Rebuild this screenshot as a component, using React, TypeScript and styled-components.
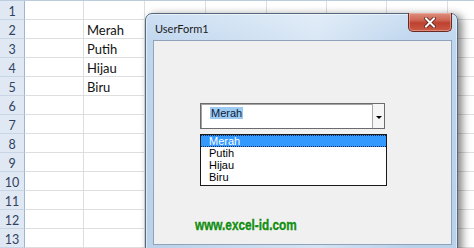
import React from 'react';
import styled, { createGlobalStyle } from 'styled-components';

const COLS = [25, 59, 61, 61, 61, 60, 60, 61, 61];
const GRID = COLS.map(c => `${c}px`).join(' ');

const GlobalStyle = createGlobalStyle`
  html, body {
    margin: 0;
    padding: 0;
    background: #ffffff;
    overflow: hidden;
  }
  body {
    font-family: Lato, 'Liberation Sans', sans-serif;
  }
`;

const Sheet = styled.div`
  position: relative;
  width: 474px;
  height: 248px;
  overflow: hidden;
  background: #ffffff;
`;

const HeaderStrip = styled.div`
  display: grid;
  grid-template-columns: ${GRID};
  height: 1px;
  background: #bccbdd;
`;

const Row = styled.div`
  display: grid;
  grid-template-columns: ${GRID};
  height: 19px;
`;

const RowNumber = styled.div`
  box-sizing: border-box;
  display: flex;
  align-items: center;
  justify-content: center;
  padding-top: 2px;
  background: #e0e8f4;
  border-right: 1px solid #9eb6ce;
  border-bottom: 1px solid #c8d5e5;
  color: #2f4260;
  font-size: 12.5px;
`;

const Cell = styled.div`
  box-sizing: border-box;
  display: flex;
  align-items: center;
  padding: 1px 0 0 3px;
  border-right: 1px solid #dcdedf;
  border-bottom: 1px solid #dcdedf;
  color: #111;
  font-size: 13px;
  white-space: nowrap;
`;

/* ---- dialog ---- */

const Window = styled.div`
  position: absolute;
  left: 145px;
  top: 13px;
  width: 313px;
  height: 240px;
  box-sizing: border-box;
  display: flex;
  flex-direction: column;
  padding: 0 5px 7px 7px;
  border: 1px solid #56687e;
  border-radius: 7px 7px 0 0;
  background:
    linear-gradient(90deg, rgba(255,255,255,0) 0%, rgba(255,255,255,0.4) 55%, rgba(255,255,255,0) 85%),
    linear-gradient(180deg, #cde0f3 0%, #c0d6ee 12%, #bad1ea 100%);
  box-shadow: 4px 2px 9px rgba(0, 0, 0, 0.5), inset 0 0 0 1px rgba(255,255,255,0.5);
`;

const TitleBar = styled.div`
  height: 26px;
  display: flex;
  align-items: flex-start;
  justify-content: space-between;
`;

const Title = styled.span`
  margin: 8px 0 0 2px;
  font-family: Lato, 'Liberation Sans', sans-serif;
  font-size: 11px;
  color: #1b1b1b;
`;

const CloseButton = styled.div`
  margin-top: -1px;
  width: 44px;
  height: 19px;
  box-sizing: border-box;
  display: flex;
  align-items: center;
  justify-content: center;
  border: 1px solid #6a2a22;
  border-top: none;
  border-radius: 0 0 5px 5px;
  background: linear-gradient(180deg, #dc9080 0%, #cf6452 40%, #bd4230 55%, #c95a44 100%);
  box-shadow: inset 0 0 0 1px rgba(255, 200, 190, 0.45);
`;

const Client = styled.div`
  flex: 1;
  display: flex;
  flex-direction: column;
  align-items: flex-start;
  padding: 62px 0 0 46px;
  background: #f0f0f0;
  border: 1px solid #8fa3ba;
`;

const Combo = styled.div`
  width: 185px;
  height: 26px;
  box-sizing: border-box;
  display: flex;
  border: 1px solid #6c6c6c;
  box-shadow: inset 1px 1px 0 #a3a3a3;
  background: #ffffff;
`;

const ComboText = styled.div`
  flex: 1;
  display: flex;
  align-items: flex-start;
  padding: 3px 0 0 9px;
`;

const Selected = styled.span`
  display: block;
  padding: 0 1px;
  height: 12px;
  line-height: 12px;
  background: #9ccaf0;
  color: #0d1b3d;
  font-family: 'Liberation Sans', Arial, sans-serif;
  font-size: 11px;
`;

const DropButton = styled.div`
  width: 12px;
  display: flex;
  align-items: center;
  justify-content: center;
  padding-top: 3px;
  box-sizing: border-box;
  background: #f6f6f6;
  border-left: 1px solid #a8a8a8;
`;

const Arrow = styled.div`
  width: 0;
  height: 0;
  border-left: 3px solid transparent;
  border-right: 3px solid transparent;
  border-top: 3px solid #000;
`;

const List = styled.div`
  margin-top: 5px;
  width: 187px;
  box-sizing: border-box;
  padding-bottom: 2px;
  border: 1px solid #1a1a1a;
  background: #ffffff;
`;

const Item = styled.div<{ $active?: boolean }>`
  height: 12px;
  box-sizing: border-box;
  padding-left: 8px;
  line-height: 11px;
  font-family: 'Liberation Sans', Arial, sans-serif;
  font-size: 11px;
  color: ${p => (p.$active ? '#ffffff' : '#000000')};
  background: ${p => (p.$active ? '#3399ff' : 'transparent')};
  border: 1px dotted ${p => (p.$active ? '#0a2a55' : 'transparent')};
  border-left: none;
  border-right: none;
`;

const Website = styled.div`
  margin: 30px 0 0 -5px;
  transform: scaleX(0.76);
  transform-origin: left center;
  font-family: 'Liberation Sans', Arial, sans-serif;
  font-weight: bold;
  font-size: 15.5px;
  color: #129612;
  -webkit-text-stroke: 0.4px #0c7a0c;
  text-shadow: 0 0 2px #ffffff, 0 0 3px #ffffff;
  white-space: nowrap;
`;

const cellText: Record<number, string> = { 2: 'Merah', 3: 'Putih', 4: 'Hijau', 5: 'Biru' };
const items = ['Merah', 'Putih', 'Hijau', 'Biru'];

const App: React.FC = () => {
  const rows = Array.from({ length: 13 }, (_, i) => i + 1);

  return (
    <Sheet>
      <GlobalStyle />
      <HeaderStrip />
      {rows.map(r => (
        <Row key={r}>
          <RowNumber>{r}</RowNumber>
          {COLS.slice(1).map((_, c) => (
            <Cell key={c}>{c === 1 ? cellText[r] : null}</Cell>
          ))}
        </Row>
      ))}

      <Window>
        <TitleBar>
          <Title>UserForm1</Title>
          <CloseButton>
            <svg width="12" height="11" viewBox="0 0 12 11">
              <path d="M2 1.5 L10 9.5 M10 1.5 L2 9.5" stroke="#5a1a12" strokeWidth="3.6" strokeLinecap="square" />
              <path d="M2 1.5 L10 9.5 M10 1.5 L2 9.5" stroke="#ffffff" strokeWidth="2" strokeLinecap="square" />
            </svg>
          </CloseButton>
        </TitleBar>
        <Client>
          <Combo>
            <ComboText>
              <Selected>Merah</Selected>
            </ComboText>
            <DropButton>
              <Arrow />
            </DropButton>
          </Combo>
          <List>
            {items.map((it, i) => (
              <Item key={it} $active={i === 0}>{it}</Item>
            ))}
          </List>
          <Website>www.excel-id.com</Website>
        </Client>
      </Window>
    </Sheet>
  );
};

export default App;
